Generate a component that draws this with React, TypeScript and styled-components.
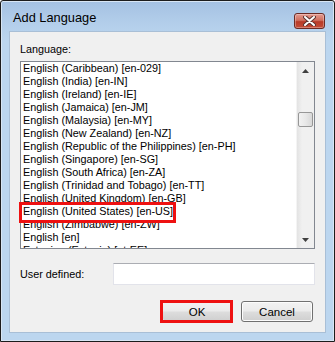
import React from 'react';
import styled, { createGlobalStyle, css } from 'styled-components';

const GlobalStyle = createGlobalStyle`
  html, body {
    margin: 0;
    padding: 0;
    background: #ffffff;
  }
  body {
    font-family: "Liberation Sans", Arial, sans-serif;
    font-size: 10.8px;
    color: #000;
  }
`;

const Window = styled.div`
  width: 335px;
  height: 342px;
  box-sizing: border-box;
  border: 1px solid #1c1c1c;
  border-radius: 3px 3px 0 0;
  background: linear-gradient(180deg, #a4c1e2 0px, #b4cfeb 24px, #bcd6ef 40px, #bcd6ef 100%);
  box-shadow: inset 0 0 0 1px #d8e6f4, inset 0 -2px 0 -1px #3aa0c8;
  display: flex;
  flex-direction: column;
  padding: 0 8px 8px 8px;
`;

const TitleBar = styled.div`
  height: 30px;
  display: flex;
  align-items: center;
  justify-content: space-between;
  padding: 0 1px 0 4px;
`;

const Title = styled.span`
  font-size: 12.8px;
  color: #000;
  margin-top: 3px;
`;

const CloseButton = styled.div`
  width: 31px;
  height: 16px;
  margin-top: 9px;
  box-sizing: border-box;
  border: 1px solid #6b2b25;
  border-radius: 3px;
  background: linear-gradient(180deg, #e49a90 0%, #d0705f 45%, #b83a28 55%, #c44d38 100%);
  box-shadow: inset 0 0 0 1px rgba(255, 255, 255, 0.3);
  display: flex;
  align-items: center;
  justify-content: center;
`;

const Content = styled.div`
  flex: 1;
  background: #f0f0f0;
  border: 1px solid #a9bfd6;
  display: flex;
  flex-direction: column;
  padding: 10px 10px 0 10px;
`;

const Label = styled.div`
  height: 15px;
  line-height: 15px;
  margin-bottom: 4px;
`;

const ListFrame = styled.div`
  position: relative;
  height: 188px;
  box-sizing: border-box;
  border: 1px solid #828790;
  background: #fff;
  display: flex;
`;

const Items = styled.div`
  flex: 1;
  overflow: hidden;
  padding-left: 2px;
`;

const Item = styled.div`
  height: 13px;
  line-height: 13px;
  white-space: nowrap;
`;

const Marker = styled.div`
  position: absolute;
  box-sizing: border-box;
  border: 3px solid #ee1111;
  pointer-events: none;
`;

const ScrollBar = styled.div`
  width: 17px;
  display: flex;
  flex-direction: column;
  background: linear-gradient(90deg, #e3e3e3 0%, #f0f0f0 30%, #f0f0f0 100%);
  border-left: 1px solid #f4f4f4;
`;

const Arrow = styled.div`
  height: 17px;
  display: flex;
  align-items: center;
  justify-content: center;
`;

const Track = styled.div`
  flex: 1;
  padding-top: 33px;
`;

const Thumb = styled.div`
  margin: 0 1px;
  height: 15px;
  box-sizing: border-box;
  border: 1px solid #979797;
  border-radius: 2px;
  background: linear-gradient(90deg, #f2f2f2 0%, #e8e8e8 50%, #d8d8d8 100%);
`;

const UserRow = styled.div`
  display: flex;
  align-items: center;
  margin-top: 14px;
  height: 22px;
`;

const UserLabel = styled.div`
  width: 93px;
`;

const TextInput = styled.div`
  flex: 1;
  height: 22px;
  box-sizing: border-box;
  border: 1px solid #e2e3ea;
  border-top-color: #abadb3;
  background: #fff;
`;

const Buttons = styled.div`
  display: flex;
  justify-content: flex-end;
  gap: 8px;
  margin-top: 16px;
  padding-right: 2px;
`;

const Button = styled.div<{ $marked?: boolean }>`
  position: relative;
  width: 72px;
  height: 21px;
  box-sizing: border-box;
  border: 1px solid #707070;
  border-radius: 3px;
  background: linear-gradient(180deg, #f2f2f2 0%, #ebebeb 48%, #dddddd 52%, #cfcfcf 100%);
  box-shadow: inset 0 0 0 1px #fcfcfc;
  display: flex;
  align-items: center;
  justify-content: center;
  font-size: 11.5px;
  ${(p) =>
    p.$marked &&
    css`
      &::after {
        content: '';
        position: absolute;
        left: -2px;
        top: -2px;
        right: -1px;
        bottom: -2px;
        border: 3px solid #ee1111;
      }
    `}
`;

const languages = [
  'English (Caribbean) [en-029]',
  'English (India) [en-IN]',
  'English (Ireland) [en-IE]',
  'English (Jamaica) [en-JM]',
  'English (Malaysia) [en-MY]',
  'English (New Zealand) [en-NZ]',
  'English (Republic of the Philippines) [en-PH]',
  'English (Singapore) [en-SG]',
  'English (South Africa) [en-ZA]',
  'English (Trinidad and Tobago) [en-TT]',
  'English (United Kingdom) [en-GB]',
  'English (United States) [en-US]',
  'English (Zimbabwe) [en-ZW]',
  'English [en]',
  'Estonian (Estonia) [et-EE]',
];

const UpArrow = () => (
  <svg width="7" height="4" viewBox="0 0 7 4">
    <path d="M3.5 0 L7 4 L0 4 Z" fill="#404040" />
  </svg>
);

const DownArrow = () => (
  <svg width="7" height="4" viewBox="0 0 7 4">
    <path d="M0 0 L7 0 L3.5 4 Z" fill="#404040" />
  </svg>
);

const CloseGlyph = () => (
  <svg width="13" height="10" viewBox="0 0 13 10">
    <path
      d="M2 1 L11 9 M11 1 L2 9"
      stroke="#5a3330"
      strokeWidth="4"
      strokeLinecap="round"
    />
    <path d="M2 1 L11 9 M11 1 L2 9" stroke="#ffffff" strokeWidth="2" strokeLinecap="round" />
  </svg>
);

const App: React.FC = () => {
  return (
    <>
      <GlobalStyle />
      <Window>
        <TitleBar>
          <Title>Add Language</Title>
          <CloseButton>
            <CloseGlyph />
          </CloseButton>
        </TitleBar>
        <Content>
          <Label>Language:</Label>
          <ListFrame>
            <Items>
              {languages.map((l) => (
                <Item key={l}>{l}</Item>
              ))}
            </Items>
            <ScrollBar>
              <Arrow>
                <UpArrow />
              </Arrow>
              <Track>
                <Thumb />
              </Track>
              <Arrow>
                <DownArrow />
              </Arrow>
            </ScrollBar>
            {/* annotation around the selected language */}
            <Marker style={{ left: -2, top: 140, width: 157, height: 21 }} />
          </ListFrame>
          <UserRow>
            <UserLabel>User defined:</UserLabel>
            <TextInput />
          </UserRow>
          <Buttons>
            <Button $marked>OK</Button>
            <Button>Cancel</Button>
          </Buttons>
        </Content>
      </Window>
    </>
  );
};

export default App;
